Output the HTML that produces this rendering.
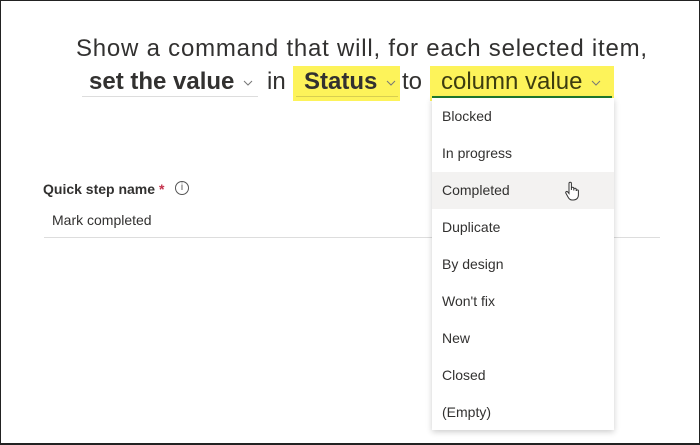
<!DOCTYPE html>
<html><head><meta charset="utf-8"><style>
*{margin:0;padding:0;box-sizing:border-box}
body{width:700px;height:445px;position:relative;overflow:hidden;background:#fff;font-family:"Liberation Sans",sans-serif;color:#323130}
.frame{position:absolute;left:0;top:0;width:700px;height:445px;border:1px solid #222;border-bottom-width:2px}
.abs{position:absolute;white-space:nowrap}
.t{font-size:24px;color:#323130}
.chev{display:inline-block;width:10px;height:6px;vertical-align:middle;margin-left:2px}
.menu{position:absolute;left:432px;top:98px;width:182px;height:332px;background:#fff;box-shadow:0 2px 6px rgba(0,0,0,.2)}
.it{height:37px;line-height:37px;padding-left:10px;font-size:14px;color:#323130}
.hl{background:#f3f2f1}
</style></head><body>
<div class="frame"></div>
<div class="abs t" style="left:76px;top:35px;letter-spacing:0.78px">Show a command that will, for each selected item,</div>
<div class="abs" style="left:82px;top:96px;width:176px;height:1px;background:#ddd"></div>
<div class="abs t" style="left:89px;top:68px;font-weight:bold">set the value <svg class="chev" viewBox="0 0 10 6"><path d="M1 1l4 4 4-4" fill="none" stroke="#777" stroke-width="1"/></svg></div>
<div class="abs t" style="left:267px;top:68px">in</div>
<div class="abs" style="left:293px;top:66px;width:107px;height:35px;background:#fdf35a"></div>
<div class="abs t" style="left:304px;top:68px;font-weight:bold">Status <svg class="chev" viewBox="0 0 10 6"><path d="M1 1l4 4 4-4" fill="none" stroke="#777" stroke-width="1"/></svg></div>
<div class="abs" style="left:296px;top:96px;width:102px;height:1px;background:#d8cf50"></div>
<div class="abs t" style="left:402px;top:68px">to</div>
<div class="abs" style="left:430px;top:66px;width:184px;height:35px;background:#fdf35a"></div>
<div class="abs t" style="left:441px;top:68px;color:#3d3d10">column value <svg class="chev" viewBox="0 0 10 6"><path d="M1 1l4 4 4-4" fill="none" stroke="#777" stroke-width="1"/></svg></div>
<div class="abs" style="left:432px;top:96px;width:180px;height:2px;background:#1e7a2e"></div>
<div class="abs" style="left:43px;top:181px;font-size:14px;font-weight:bold">Quick step name <span style="color:#c4314b">*</span></div>
<div class="abs" style="left:175px;top:181px;width:14px;height:14px;border:1px solid #555;border-radius:50%;font-size:10px;line-height:12px;text-align:center;color:#555">i</div>
<div class="abs" style="left:52px;top:212px;font-size:14px">Mark completed</div>
<div class="abs" style="left:44px;top:237px;width:616px;height:1px;background:#ddd"></div>
<div class="menu">
<div class="it">Blocked</div>
<div class="it">In progress</div>
<div class="it hl">Completed</div>
<div class="it">Duplicate</div>
<div class="it">By design</div>
<div class="it">Won't fix</div>
<div class="it">New</div>
<div class="it">Closed</div>
<div class="it">(Empty)</div>
</div>
<svg class="abs" style="left:564px;top:181px" width="16" height="20" viewBox="0 0 16 20"><path d="M5 10V2.5a1.2 1.2 0 0 1 2.4 0V9V7.5a1.2 1.2 0 0 1 2.4 0V9.5V8.5a1.2 1.2 0 0 1 2.4 0V10a1.1 1.1 0 0 1 2.2 0v4c0 3-2 5-5 5H8c-2 0-3-1-4-3L1.8 12a1.1 1.1 0 0 1 1.8-1.2L5 12.5z" fill="#fff" stroke="#333" stroke-width="1"/></svg>
</body></html>
